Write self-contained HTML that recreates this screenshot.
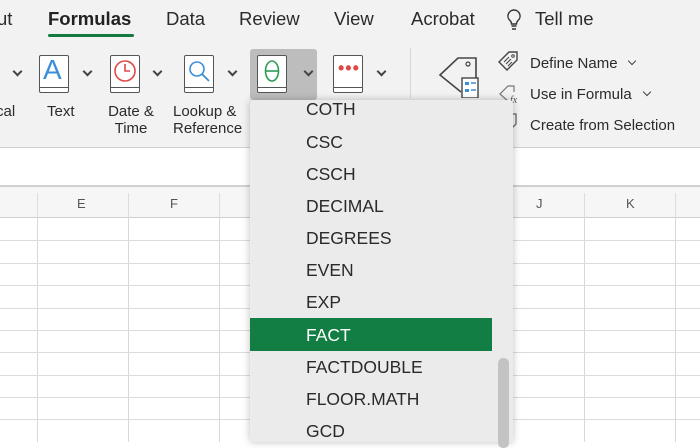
<!DOCTYPE html>
<html><head><meta charset="utf-8"><style>
*{margin:0;padding:0;box-sizing:border-box}
body{width:700px;height:442px;overflow:hidden;background:#fff;font-family:"Liberation Sans",sans-serif;position:relative;color:#222}
.ab{position:absolute}
.tab{position:absolute;top:8px;font-size:18.5px;color:#2b2b2b}
.lbl{position:absolute;font-size:15px;color:#2b2b2b;text-align:center;line-height:17px}
.chev{position:absolute;width:7px;height:7px;border-right:2px solid #444;border-bottom:2px solid #444;transform:rotate(45deg)}
.book{position:absolute;width:30px;height:38px;border:1.5px solid #555;border-radius:2px;background:#fff}
.book:after{content:"";position:absolute;left:-1px;right:-1px;bottom:4px;border-top:1.5px solid #555}
.item{position:absolute;left:306px;font-size:17.5px;color:#2a2a2a}
.vl{position:absolute;top:218px;height:224px;border-left:1px solid #d8d8d8}
.hl{position:absolute;left:0;width:700px;border-top:1px solid #dcdcdc}
</style></head><body>
<div class="ab" style="left:0;top:0;width:700px;height:147px;background:#f2f2f2"></div>
<div class="ab" style="left:0;top:147px;width:700px;border-top:1px solid #cfcfcf"></div>
<div class="ab" style="left:0;top:185px;width:700px;height:33px;background:#f6f6f6;border-top:2px solid #d0d0d0;border-bottom:1px solid #d4d4d4"></div>
<div class="tab" style="left:-3px">ut</div>
<div class="tab" style="left:48px;font-weight:bold;color:#222">Formulas</div>
<div class="ab" style="left:48px;top:34px;width:86px;height:3px;background:#157a3f;border-radius:2px"></div>
<div class="tab" style="left:166px">Data</div>
<div class="tab" style="left:239px">Review</div>
<div class="tab" style="left:334px">View</div>
<div class="tab" style="left:411px">Acrobat</div>
<svg class="ab" style="left:506px;top:8px" width="16" height="24" viewBox="0 0 16 24"><path d="M8 2a6 6 0 0 0-4 10.5c1 1 1.5 2 1.5 3.5h5c0-1.5.5-2.5 1.5-3.5A6 6 0 0 0 8 2zM5.5 18h5M6 21h4" fill="none" stroke="#333" stroke-width="1.4"/></svg>
<div class="tab" style="left:535px">Tell me</div>

<div class="chev" style="left:14px;top:68px"></div>
<div class="lbl" style="left:-4px;top:103px">cal</div>
<div class="book" style="left:39px;top:55px"></div>
<div class="ab" style="left:43px;top:54px;font-size:28px;color:#3a8fd8">A</div>
<div class="chev" style="left:84px;top:68px"></div>
<div class="lbl" style="left:47px;top:103px">Text</div>
<div class="book" style="left:110px;top:55px"></div>
<svg class="ab" style="left:112px;top:58px" width="26" height="26"><circle cx="13" cy="13" r="10" fill="none" stroke="#e04848" stroke-width="1.6"/><path d="M13 6v7h5" fill="none" stroke="#e04848" stroke-width="1.6"/></svg>
<div class="chev" style="left:154px;top:68px"></div>
<div class="lbl" style="left:104px;top:103px;width:54px">Date &amp;<br>Time</div>
<div class="book" style="left:184px;top:55px"></div>
<svg class="ab" style="left:186px;top:58px" width="26" height="26"><circle cx="11" cy="11" r="7" fill="none" stroke="#3a8fd8" stroke-width="1.6"/><path d="M16 16l7 7" stroke="#3a8fd8" stroke-width="1.8"/></svg>
<div class="chev" style="left:229px;top:68px"></div>
<div class="lbl" style="left:173px;top:103px;width:76px;text-align:left">Lookup &amp;<br>Reference</div>
<div class="ab" style="left:250px;top:49px;width:67px;height:51px;background:#bdbdbd;border-radius:3px"></div>
<div class="book" style="left:257px;top:55px"></div>
<svg class="ab" style="left:259px;top:58px" width="26" height="28"><ellipse cx="13" cy="13" rx="6.5" ry="10" fill="none" stroke="#2f9a58" stroke-width="1.6"/><path d="M6.5 13h13" stroke="#2f9a58" stroke-width="1.6"/></svg>
<div class="chev" style="left:305px;top:68px"></div>
<div class="book" style="left:333px;top:55px"></div>
<div class="ab" style="left:338px;top:58px;font-size:18px;color:#e04848;letter-spacing:1px;font-weight:bold">•••</div>
<div class="chev" style="left:378px;top:68px"></div>
<div class="ab" style="left:410px;top:48px;height:50px;border-left:1px solid #d6d6d6"></div>
<svg class="ab" style="left:436px;top:52px" width="50" height="46"><path d="M25 40L4 23L22 6H40V28" fill="none" stroke="#444" stroke-width="1.6"/><circle cx="32" cy="12" r="2" fill="none" stroke="#444" stroke-width="1.2"/><rect x="26" y="26" width="16" height="20" fill="#fff" stroke="#444" stroke-width="1.4"/><rect x="29" y="30" width="4" height="3" fill="#3a8fd8"/><rect x="29" y="37" width="4" height="3" fill="#3a8fd8"/><path d="M35 31h5M35 38h5" stroke="#3a8fd8" stroke-width="1.4"/></svg>
<svg class="ab" style="left:497px;top:50px" width="24" height="24"><path d="M2 12L12 2h8v8L10 20z" fill="none" stroke="#444" stroke-width="1.4"/><circle cx="16" cy="6" r="1.3" fill="none" stroke="#444"/><path d="M7 12l5-5M9 14l5-5M11 16l4-4" stroke="#444" stroke-width="1"/></svg>
<svg class="ab" style="left:497px;top:82px" width="24" height="24"><path d="M12 20L3 12L11 4H17V10" fill="none" stroke="#777" stroke-width="1.2"/><text x="13" y="21" font-size="10" font-style="italic" fill="#555" font-family="Liberation Serif">fx</text></svg>
<svg class="ab" style="left:500px;top:112px" width="20" height="24"><path d="M4 2h12v10L10 18M4 2v8" fill="none" stroke="#666" stroke-width="1.3"/></svg>
<div class="lbl" style="left:530px;top:55px">Define Name</div>
<div class="chev" style="left:629px;top:58px;width:6px;height:6px;border-width:1.6px"></div>
<div class="lbl" style="left:530px;top:86px">Use in Formula</div>
<div class="chev" style="left:644px;top:89px;width:6px;height:6px;border-width:1.6px"></div>
<div class="lbl" style="left:530px;top:117px">Create from Selection</div>

<div class="ab" style="left:0;top:218px;width:700px;height:224px;background:#fff"></div>
<div class="ab" style="left:0;top:201px;width:700px;height:17px;background:#f6f6f6"></div>
<div class="ab" style="left:0;top:217px;width:700px;border-top:1.5px solid #cfcfcf"></div>
<div class="ab" style="left:37px;top:193px;height:25px;border-left:1px solid #ddd"></div>
<div class="ab" style="left:128px;top:193px;height:25px;border-left:1px solid #ddd"></div>
<div class="ab" style="left:219px;top:193px;height:25px;border-left:1px solid #ddd"></div>
<div class="ab" style="left:584px;top:193px;height:25px;border-left:1px solid #ddd"></div>
<div class="ab" style="left:675px;top:193px;height:25px;border-left:1px solid #ddd"></div>
<div class="ab" style="left:77px;top:196px;font-size:13px;color:#555">E</div>
<div class="ab" style="left:170px;top:196px;font-size:13px;color:#555">F</div>
<div class="ab" style="left:536px;top:196px;font-size:13px;color:#555">J</div>
<div class="ab" style="left:626px;top:196px;font-size:13px;color:#555">K</div>
<div class="vl" style="left:37px"></div><div class="vl" style="left:128px"></div><div class="vl" style="left:219px"></div><div class="vl" style="left:584px"></div><div class="vl" style="left:675px"></div>
<div class="hl" style="top:240px"></div><div class="hl" style="top:263px"></div><div class="hl" style="top:285px"></div><div class="hl" style="top:308px"></div><div class="hl" style="top:330px"></div><div class="hl" style="top:352px"></div><div class="hl" style="top:375px"></div><div class="hl" style="top:397px"></div><div class="hl" style="top:419px"></div>

<div class="ab" style="left:250px;top:100px;width:263px;height:342px;background:#ebebeb;box-shadow:0 0 8px rgba(0,0,0,.25);border-radius:4px 4px 0 0"></div>
<div class="ab" style="left:250px;top:318px;width:242px;height:33px;background:#137e43"></div>
<div class="ab" style="left:498px;top:358px;width:11px;height:90px;background:#c3c3c3;border-radius:5px"></div>
<div class="item" style="top:99px">COTH</div>
<div class="item" style="top:132px">CSC</div>
<div class="item" style="top:164px">CSCH</div>
<div class="item" style="top:196px">DECIMAL</div>
<div class="item" style="top:228px">DEGREES</div>
<div class="item" style="top:260px">EVEN</div>
<div class="item" style="top:292px">EXP</div>
<div class="item" style="top:325px;color:#fff">FACT</div>
<div class="item" style="top:357px">FACTDOUBLE</div>
<div class="item" style="top:389px">FLOOR.MATH</div>
<div class="item" style="top:421px">GCD</div>
</body></html>
